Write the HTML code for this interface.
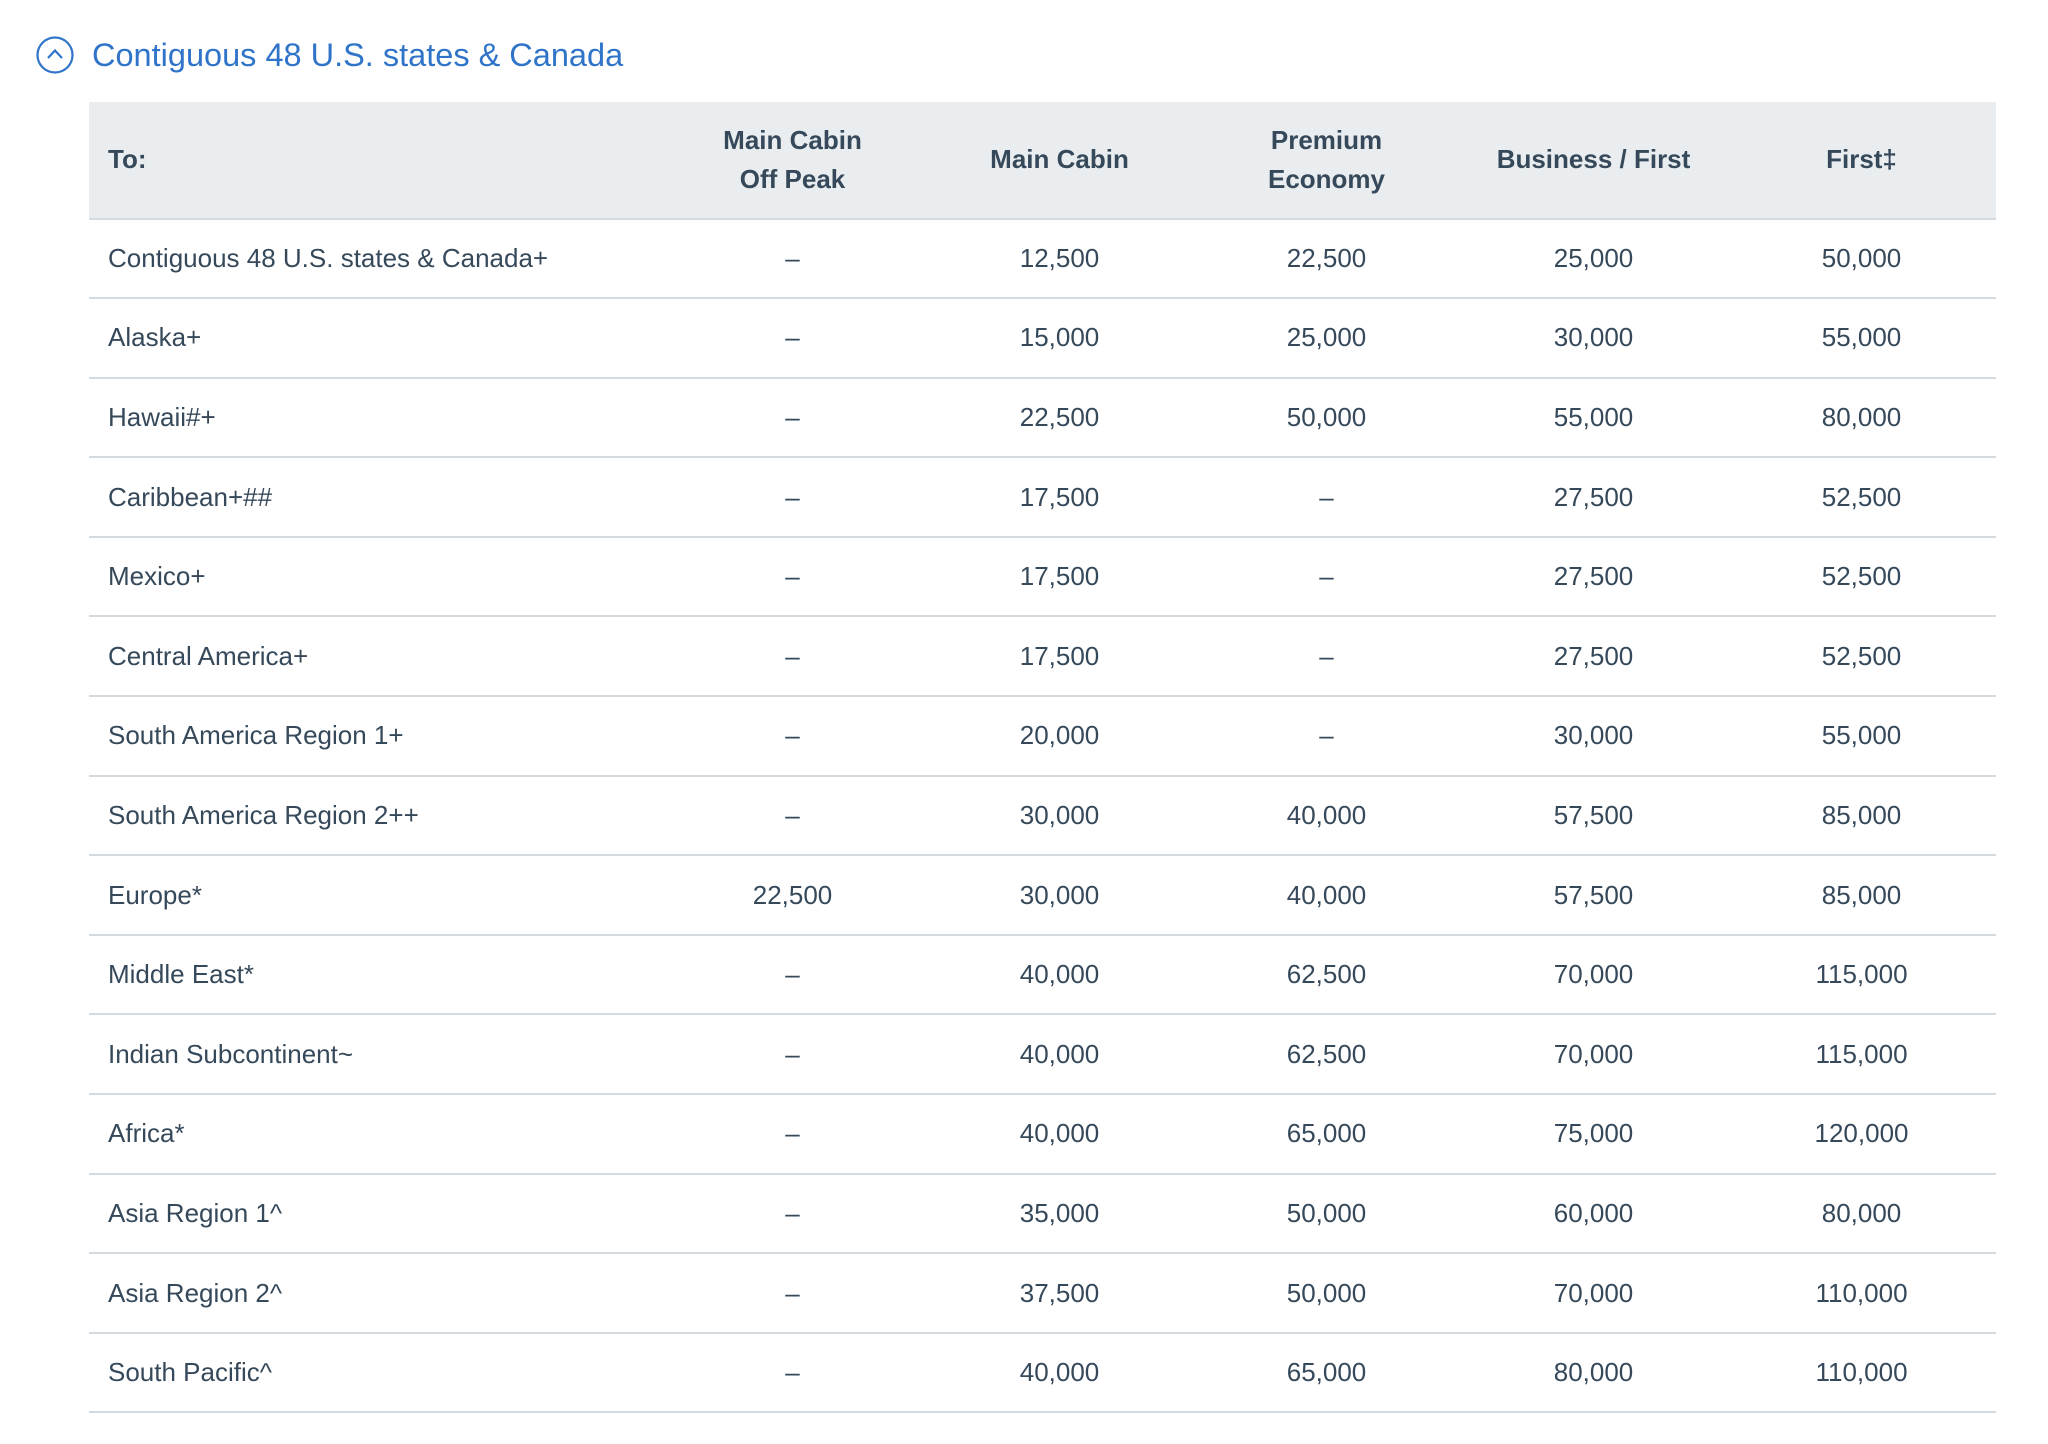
<!DOCTYPE html>
<html><head><meta charset="utf-8"><style>
body{margin:0;background:#fff;width:2048px;height:1444px;overflow:hidden;font-family:"Liberation Sans",sans-serif;color:#36495a}
.title{position:absolute;left:92px;top:35px;font-size:32.5px;color:#2f74c9;line-height:40px}
svg{position:absolute;left:35px;top:35px}
table{position:absolute;left:89px;top:102px;width:1907px;border-collapse:collapse;table-layout:fixed}
th{background:#e9edef;height:115.5px;font-size:26px;font-weight:bold;line-height:39px;border-bottom:2px solid #d3dbe1;text-align:center;padding:0}
th:first-child{text-align:left;padding-left:19px}
td{height:77.6px;border-bottom:2px solid #d3dbe1;font-size:26px;text-align:center;padding:0}
td:first-child{text-align:left;padding-left:19px}
</style></head><body>
<svg width="40" height="40" viewBox="0 0 40 40"><circle cx="20" cy="20" r="17.5" fill="none" stroke="#2f74c9" stroke-width="2.2"/><path d="M13 23 L20 15.5 L27 23" fill="none" stroke="#2f74c9" stroke-width="2.2"/></svg>
<div class="title">Contiguous 48 U.S. states &amp; Canada</div>
<table>
<colgroup><col style="width:570px"><col style="width:267px"><col style="width:267px"><col style="width:267px"><col style="width:267px"><col style="width:269px"></colgroup>
<tr><th>To:</th><th>Main Cabin<br>Off Peak</th><th>Main Cabin</th><th>Premium<br>Economy</th><th>Business / First</th><th>First‡</th></tr>
<tr><td>Contiguous 48 U.S. states &amp; Canada+</td><td>–</td><td>12,500</td><td>22,500</td><td>25,000</td><td>50,000</td></tr>
<tr><td>Alaska+</td><td>–</td><td>15,000</td><td>25,000</td><td>30,000</td><td>55,000</td></tr>
<tr><td>Hawaii#+</td><td>–</td><td>22,500</td><td>50,000</td><td>55,000</td><td>80,000</td></tr>
<tr><td>Caribbean+##</td><td>–</td><td>17,500</td><td>–</td><td>27,500</td><td>52,500</td></tr>
<tr><td>Mexico+</td><td>–</td><td>17,500</td><td>–</td><td>27,500</td><td>52,500</td></tr>
<tr><td>Central America+</td><td>–</td><td>17,500</td><td>–</td><td>27,500</td><td>52,500</td></tr>
<tr><td>South America Region 1+</td><td>–</td><td>20,000</td><td>–</td><td>30,000</td><td>55,000</td></tr>
<tr><td>South America Region 2++</td><td>–</td><td>30,000</td><td>40,000</td><td>57,500</td><td>85,000</td></tr>
<tr><td>Europe*</td><td>22,500</td><td>30,000</td><td>40,000</td><td>57,500</td><td>85,000</td></tr>
<tr><td>Middle East*</td><td>–</td><td>40,000</td><td>62,500</td><td>70,000</td><td>115,000</td></tr>
<tr><td>Indian Subcontinent~</td><td>–</td><td>40,000</td><td>62,500</td><td>70,000</td><td>115,000</td></tr>
<tr><td>Africa*</td><td>–</td><td>40,000</td><td>65,000</td><td>75,000</td><td>120,000</td></tr>
<tr><td>Asia Region 1^</td><td>–</td><td>35,000</td><td>50,000</td><td>60,000</td><td>80,000</td></tr>
<tr><td>Asia Region 2^</td><td>–</td><td>37,500</td><td>50,000</td><td>70,000</td><td>110,000</td></tr>
<tr><td>South Pacific^</td><td>–</td><td>40,000</td><td>65,000</td><td>80,000</td><td>110,000</td></tr>
</table>
</body></html>
